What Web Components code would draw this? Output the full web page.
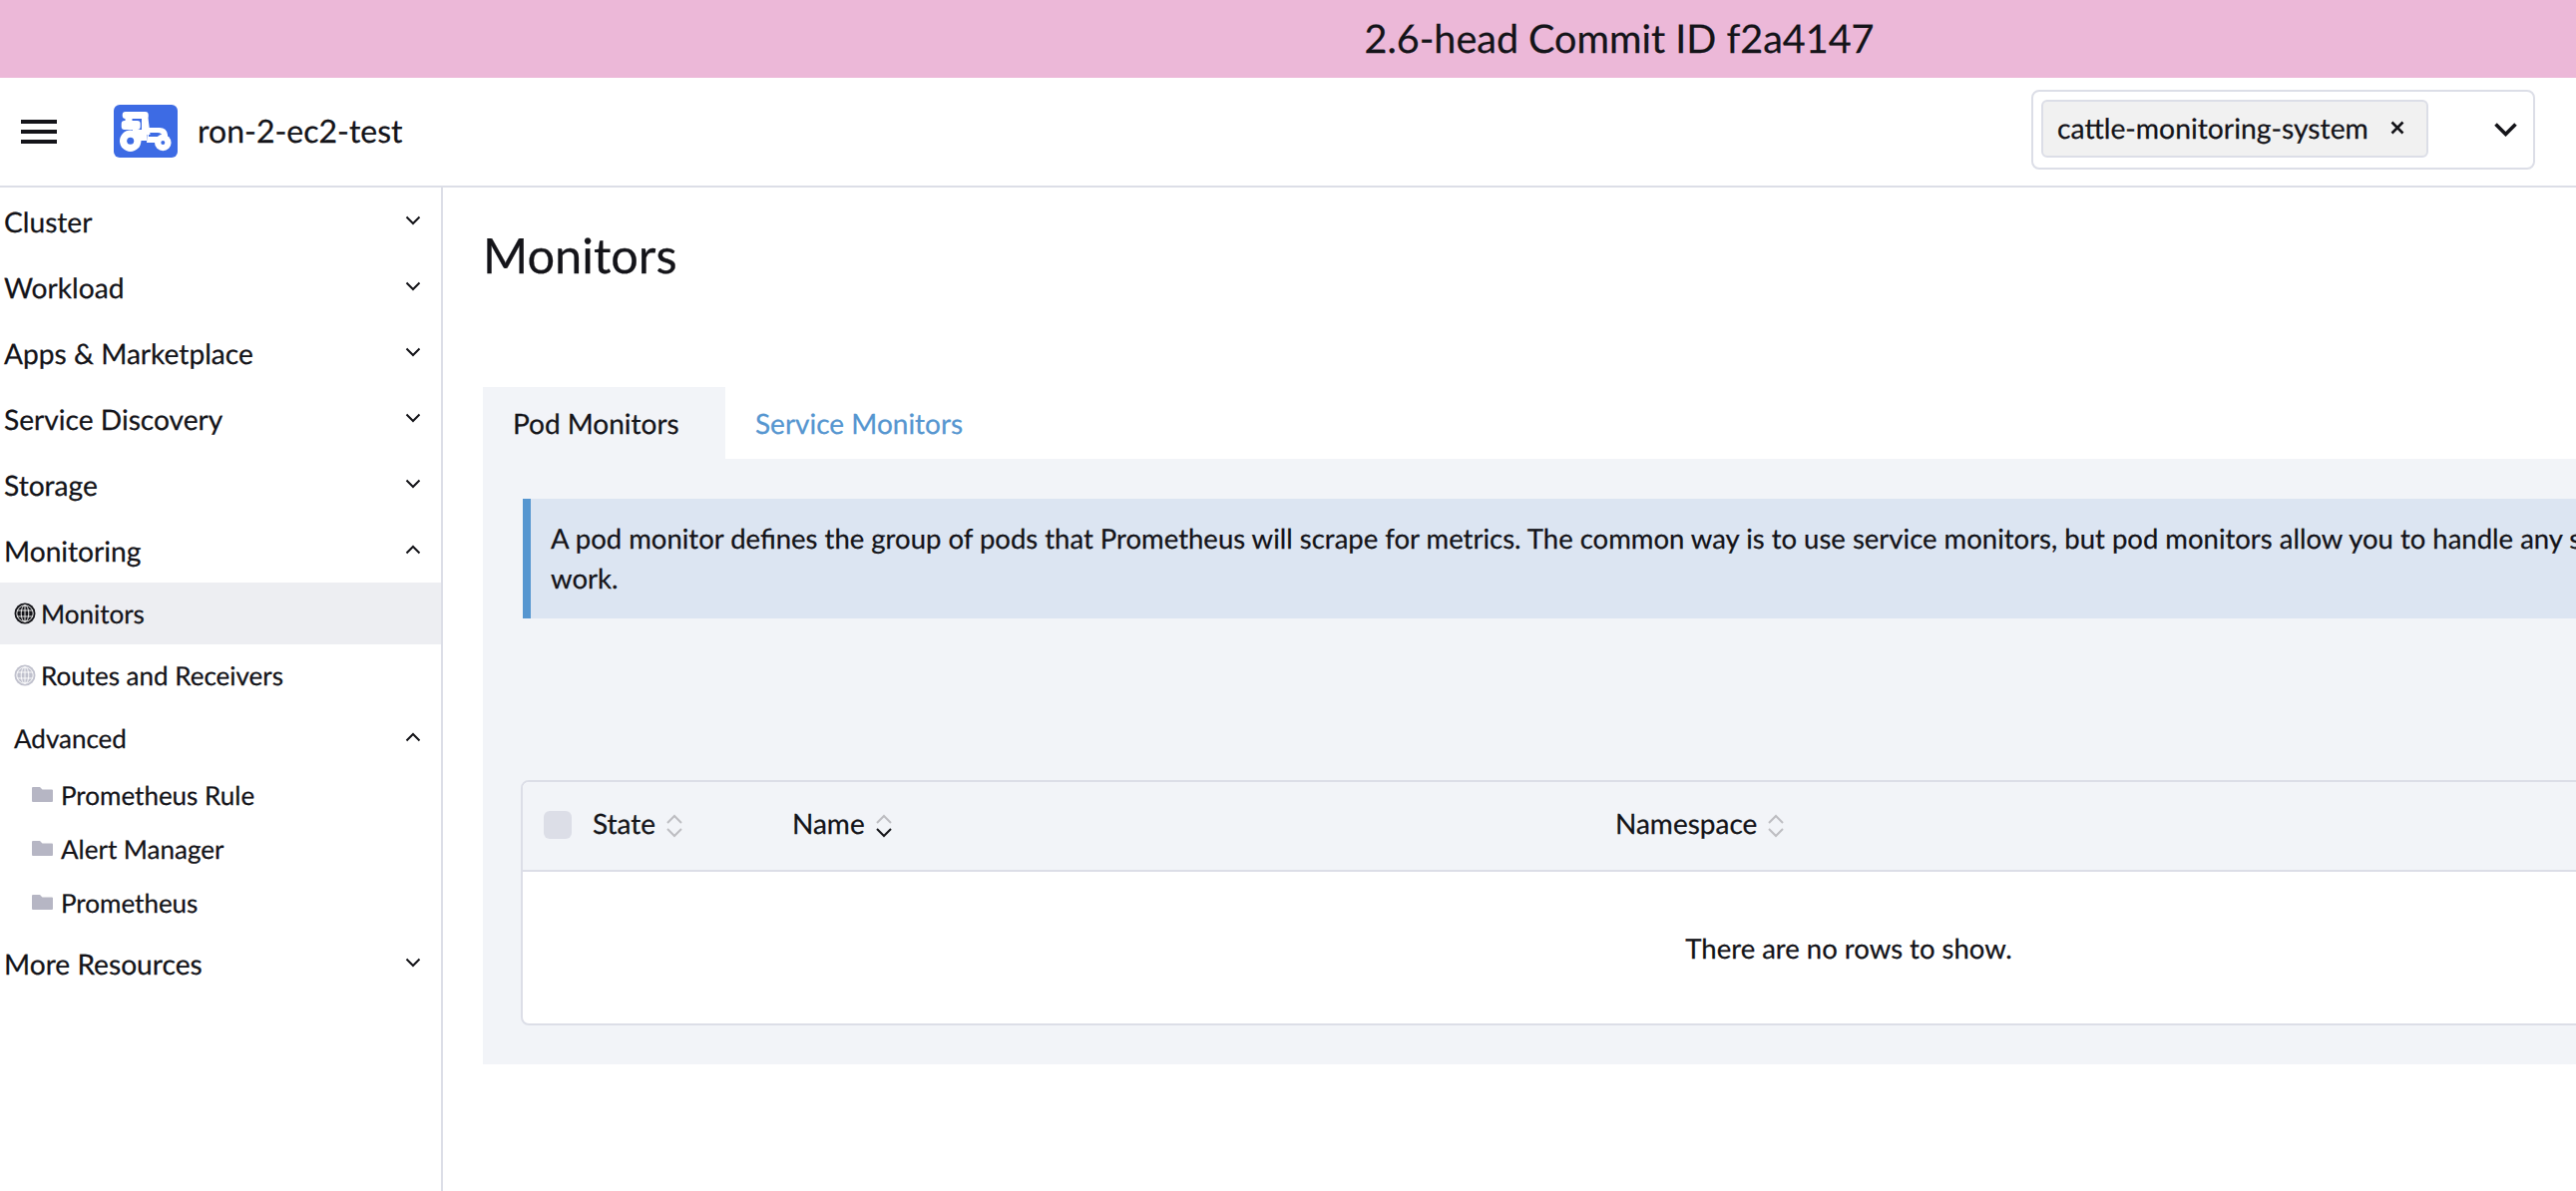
<!DOCTYPE html>
<html>
<head>
<meta charset="utf-8">
<title>Monitors</title>
<style>
  html, body { margin: 0; height: 100%; overflow: hidden; background: #fff; }
  body { font-family: Lato, "Liberation Sans", sans-serif; color: #141419; width: 3246px; text-rendering: geometricPrecision; -webkit-text-stroke: 0.25px; }
</style>
</head>
<body>
<app-shell>
  <fixed-banner slot="banner">2.6-head Commit ID f2a4147</fixed-banner>
  <top-bar slot="top" cluster="ron-2-ec2-test">
    <ns-select>cattle-monitoring-system</ns-select>
  </top-bar>
  <side-nav slot="nav">
    <nav-group>Cluster</nav-group>
    <nav-group>Workload</nav-group>
    <nav-group>Apps &amp; Marketplace</nav-group>
    <nav-group>Service Discovery</nav-group>
    <nav-group>Storage</nav-group>
    <nav-group open>Monitoring</nav-group>
    <nav-link icon="globe" active>Monitors</nav-link>
    <nav-link icon="globe">Routes and Receivers</nav-link>
    <nav-group open sub>Advanced</nav-group>
    <nav-link icon="folder">Prometheus Rule</nav-link>
    <nav-link icon="folder">Alert Manager</nav-link>
    <nav-link icon="folder">Prometheus</nav-link>
    <nav-group>More Resources</nav-group>
  </side-nav>
  <monitors-page slot="main">
    <info-banner>A pod monitor defines the group of pods that Prometheus will scrape for metrics. The common way is to use service monitors, but pod monitors allow you to handle any situation where service monitors don't<br>work.</info-banner>
    <empty-table>There are no rows to show.</empty-table>
  </monitors-page>
</app-shell>

<script>
const chevron = (up) => `<svg width="16" height="10" viewBox="0 0 16 10" fill="none" stroke="currentColor" stroke-width="2"><path d="${up ? "M1.5 8.5 8 2l6.5 6.5" : "M1.5 1.5 8 8l6.5-6.5"}"/></svg>`;

class AppShell extends HTMLElement {
	constructor() {
		super();
		this.attachShadow({ mode: "open" });
		this.shadowRoot.innerHTML = `
    <style>
    :host { display: grid; grid-template-columns: 444px 1fr; grid-template-rows: 78px 110px 1006px; width: 3246px; }
    ::slotted([slot=banner]), ::slotted([slot=top]) { grid-column: 1 / 3; }
    </style>
    <slot name="banner"></slot>
    <slot name="top"></slot>
    <slot name="nav"></slot>
    <slot name="main"></slot>
    `;
	}
}
customElements.define("app-shell", AppShell);

class FixedBanner extends HTMLElement {
	constructor() {
		super();
		this.attachShadow({ mode: "open" });
		this.shadowRoot.innerHTML = `
    <style>
    :host { display: flex; align-items: center; justify-content: center; background: #ecb8d8; font-size: 39.5px; padding-bottom: 2px; box-sizing: border-box; }
    </style>
    <slot></slot>
    `;
	}
}
customElements.define("fixed-banner", FixedBanner);

class TopBar extends HTMLElement {
	constructor() {
		super();
		this.attachShadow({ mode: "open" });
		this.shadowRoot.innerHTML = `
    <style>
    :host { display: flex; align-items: flex-start; background: #fff; border-bottom: 2px solid #dcdee7; box-sizing: border-box; height: 110px; }
    .menu { width: 36px; height: 24px; margin: 42px 57px 0 21px; display: flex; flex-direction: column; justify-content: space-between; }
    .menu i { display: block; height: 4px; background: #141419; }
    .logo { margin-top: 27px; width: 64px; height: 53px; }
    .name { margin: 30px 0 0 20px; font-size: 32px; line-height: 46px; flex: 1; }
    .right { margin: 12px 705px 0 0; }
    </style>
    <div class="menu"><i></i><i></i><i></i></div>
    <svg class="logo" viewBox="0 0 64 53">
      <rect width="64" height="53" rx="6" fill="#3d6be4"/>
      <g fill="#fff">
        <rect x="8.7" y="7" width="26" height="7" rx="3"/>
        <path d="M11.500 13h7v4h-7z"/>
        <rect x="7.700" y="16" width="19" height="9" rx="3"/>
        <path d="M28 9h6l2.500 21H28z"/>
        <path d="M19 25h14v11H19z"/>
        <path fill-rule="evenodd" d="M34 23h12q7 0 8 7v8H33zM35 28v4h14q-1-4-5-4z"/>
        <circle cx="16.700" cy="36.300" r="10.700"/>
        <circle cx="49.300" cy="38" r="8.300"/>
      </g>
      <circle cx="16.700" cy="36.300" r="3.500" fill="#3d6be4"/>
      <circle cx="49.300" cy="38" r="2" fill="#3d6be4"/>
    </svg>
    <div class="name"></div>
    <div class="right"><slot></slot></div>
    `;
		this.shadowRoot.querySelector(".name").textContent = this.getAttribute("cluster");
	}
}
customElements.define("top-bar", TopBar);

class NsSelect extends HTMLElement {
	constructor() {
		super();
		this.attachShadow({ mode: "open" });
		this.shadowRoot.innerHTML = `
    <style>
    :host { display: flex; align-items: flex-start; box-sizing: border-box; width: 505px; height: 80px; border: 2px solid #dcdee7; border-radius: 8px; padding: 8px 0 0 8px; background: #fff; }
    .tag { display: flex; align-items: center; flex: none; box-sizing: border-box; height: 58px; width: 388px; padding-left: 14px; background: #f1f1f1; border: 2px solid #dcdee7; border-radius: 6px; font-size: 28.3px; white-space: nowrap; }
    .x { margin: -2px 0 0 22px; width: 14px; height: 14px; flex: none; }
    .chev { margin: 22px 0 0 66px; width: 23px; height: 15px; flex: none; }
    </style>
    <div class="tag"><span><slot></slot></span>
      <svg class="x" viewBox="0 0 14 14" stroke="#141419" stroke-width="2.6"><path d="M1.500 1.500l11 11M12.500 1.500l-11 11"/></svg>
    </div>
    <svg class="chev" viewBox="0 0 23 15" fill="none" stroke="#141419" stroke-width="3.6"><path d="M1.500 2.500l10 10 10-10"/></svg>
    `;
	}
}
customElements.define("ns-select", NsSelect);

class SideNav extends HTMLElement {
	constructor() {
		super();
		this.attachShadow({ mode: "open" });
		this.shadowRoot.innerHTML = `
    <style>
    :host { display: flex; flex-direction: column; background: #fff; border-right: 2px solid #dcdee7; box-sizing: border-box; overflow: hidden; }
    </style>
    <slot></slot>
    `;
	}
}
customElements.define("side-nav", SideNav);

class NavGroup extends HTMLElement {
	constructor() {
		super();
		this.attachShadow({ mode: "open" });
		const sub = this.hasAttribute("sub");
		this.shadowRoot.innerHTML = `
    <style>
    :host { display: flex; align-items: center; justify-content: space-between; height: ${sub ? 62 : 66}px; flex: none; padding: 0 20px 0 ${sub ? 14 : 4}px; font-size: ${sub ? 26 : 28.15}px; }
    span { padding-top: 1px; }
    svg { display: block; }
    </style>
    <span><slot></slot></span>
    ${chevron(this.hasAttribute("open"))}
    `;
	}
}
customElements.define("nav-group", NavGroup);

const globe = `<svg width="22" height="22" viewBox="0 0 22 22"><circle cx="11" cy="11" r="10.500" fill="currentColor"/><g fill="none" stroke="#fff" stroke-width=".9"><circle cx="11" cy="11" r="8.200"/><ellipse cx="11" cy="11" rx="3.800" ry="8.200"/><path d="M11 2.500v17M3 8h16M3 14h16"/></g></svg>`;
const folder = `<svg width="21" height="15" viewBox="0 0 21 15" fill="currentColor"><path d="M0 1q0-1 1-1h7l2.500 2.500H20q1 0 1 1V14q0 1-1 1H1q-1 0-1-1z"/></svg>`;

class NavLink extends HTMLElement {
	constructor() {
		super();
		this.attachShadow({ mode: "open" });
		const isFolder = this.getAttribute("icon") === "folder";
		const active = this.hasAttribute("active");
		this.shadowRoot.innerHTML = `
    <style>
    :host { display: flex; align-items: center; flex: none; height: ${isFolder ? 54 : 62}px; padding-left: ${isFolder ? 32 : 14}px; gap: ${isFolder ? 8 : 5}px; font-size: 26px; background: ${active ? "#edeef2" : "transparent"}; }
    .icon { display: flex; color: ${active ? "#141419" : "#c0c1cd"}; }
    :host([icon=folder]) .icon { color: #b6b6c4; margin-top: -2px; }
    </style>
    <span class="icon">${isFolder ? folder : globe}</span>
    <span><slot></slot></span>
    `;
	}
}
customElements.define("nav-link", NavLink);

class MonitorsPage extends HTMLElement {
	constructor() {
		super();
		this.attachShadow({ mode: "open" });
		this.shadowRoot.innerHTML = `
    <style>
    :host { display: block; padding: 0 24px 0 40px; background: #fff; }
    h1 { margin: 0; font-weight: 400; font-size: 48.7px; line-height: 60px; padding-top: 38px; height: 162px; }
    .tabs { display: flex; height: 72px; font-size: 28px; }
    .tab { display: flex; align-items: center; box-sizing: border-box; }
    .tab.on { background: #f2f4f8; width: 243px; padding-left: 30px; }
    .tab.off { color: #5696d0; padding-left: 30px; }
    .panel { background: #f2f4f8; padding: 40px 38px 39px; }
    </style>
    <h1>Monitors</h1>
    <div class="tabs"><div class="tab on">Pod Monitors</div><div class="tab off">Service Monitors</div></div>
    <div class="panel"><slot></slot></div>
    `;
	}
}
customElements.define("monitors-page", MonitorsPage);

class InfoBanner extends HTMLElement {
	constructor() {
		super();
		this.attachShadow({ mode: "open" });
		this.shadowRoot.innerHTML = `
    <style>
    :host { display: block; box-sizing: border-box; height: 120px; margin: 0 0 162px 2px; padding: 20px 0 0 20px; background: #dce5f2; border-left: 8px solid #5696d0; font-size: 27.5px; line-height: 40px; white-space: nowrap; overflow: hidden; }
    </style>
    <slot></slot>
    `;
	}
}
customElements.define("info-banner", InfoBanner);

class EmptyTable extends HTMLElement {
	constructor() {
		super();
		this.attachShadow({ mode: "open" });
		const sort = (dark) => `<svg class="sort" width="16" height="24" viewBox="0 0 16 24" fill="none" stroke-width="2"><path stroke="#bdbdc2" d="M1 9l7-7 7 7"/><path stroke="${dark ? "#141419" : "#bdbdc2"}" d="M1 15l7 7 7-7"/></svg>`;
		this.shadowRoot.innerHTML = `
    <style>
    :host { display: block; box-sizing: border-box; height: 246px; border: 2px solid #dcdee7; border-radius: 8px; background: #fff; overflow: hidden; font-size: 28px; }
    .head { display: grid; grid-template-columns: 49px 200px 825px 1fr; align-items: center; height: 90px; box-sizing: border-box; border-bottom: 2px solid #dcdee7; background: #f2f4f8; padding: 0 0 6px 21px; }
    .check { width: 28px; height: 28px; border-radius: 6px; background: #dcdee7; margin-top: 4px; }
    .col { display: flex; align-items: center; gap: 11px; }
    .sort { margin-top: 5px; }
    .empty { display: flex; align-items: center; justify-content: center; height: 152px; font-size: 27.5px; }
    </style>
    <div class="head">
      <div class="check"></div>
      <div class="col">State ${sort(false)}</div>
      <div class="col">Name ${sort(true)}</div>
      <div class="col">Namespace ${sort(false)}</div>
    </div>
    <div class="empty"><slot></slot></div>
    `;
	}
}
customElements.define("empty-table", EmptyTable);
</script>
</body>
</html>
